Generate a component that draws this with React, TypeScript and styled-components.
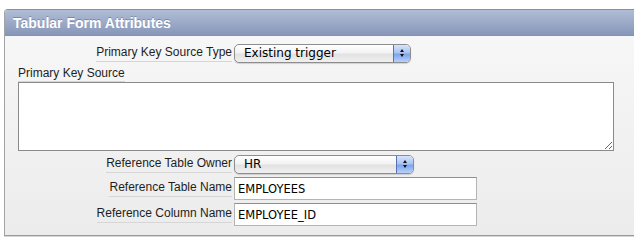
import React from "react";
import styled, { createGlobalStyle } from "styled-components";

const Global = createGlobalStyle`
  html, body { margin: 0; padding: 0; background: #ffffff; overflow: hidden; }
  body { font-family: "Liberation Sans", Arial, sans-serif; }
  * { box-sizing: border-box; }
`;

const Page = styled.div`
  padding: 9px 0 0 4px;
  width: 634px;
  height: 241px;
  overflow: hidden;
`;

const Panel = styled.section`
  width: 660px;
  border: 1px solid #a3a3a3;
  border-top-color: #8e8e8e;
  border-bottom-color: #9a9a9a;
  border-radius: 4px 4px 0 0;
  box-shadow: 0 1px 0 #d6d6d6;
  overflow: hidden;
  background: linear-gradient(#f8f8f8, #ececec);
`;

const Header = styled.h2`
  margin: 0;
  height: 26px;
  padding: 0 8px;
  display: flex;
  align-items: center;
  font: bold 14px "Liberation Sans", Arial, sans-serif;
  color: #ffffff;
  text-shadow: 0 -1px 0 rgba(40, 55, 90, 0.35);
  background: linear-gradient(#b1bdd6, #8797b9);
  border-bottom: 1px solid #8192b4;
`;

const Body = styled.div`
  padding: 7px 0 9px 12px;
  display: flex;
  flex-direction: column;
`;

const Row = styled.div<{ $h: number; $mt?: number }>`
  display: grid;
  grid-template-columns: 215px auto;
  column-gap: 2px;
  align-items: center;
  height: ${(p) => p.$h}px;
  margin-top: ${(p) => p.$mt ?? 0}px;
`;

const LabelCell = styled.div`
  display: flex;
  justify-content: flex-end;
`;

const Label = styled.label`
  display: inline-block;
  font-size: 12px;
  line-height: 14px;
  color: #1e1e1e;
  padding-bottom: 2px;
  border-bottom: 1px solid #d6d6d6;
`;

const StackLabel = styled(Label)`
  align-self: flex-start;
  margin: 3px 0 0 1px;
  padding-bottom: 1px;
`;

const SelectBox = styled.div<{ $w: number }>`
  width: ${(p) => p.$w}px;
  height: 19px;
  display: flex;
  border: 1px solid #8d8d8d;
  border-radius: 5px;
  background: linear-gradient(#ffffff 0%, #f3f3f3 45%, #e2e2e2 55%, #f0f0f0 100%);
  box-shadow: 0 1px 1px rgba(0, 0, 0, 0.15);
  overflow: hidden;
`;

const SelectValue = styled.span`
  flex: 1;
  padding-left: 9px;
  font: 12px "DejaVu Sans", Verdana, sans-serif;
  line-height: 17px;
  color: #000;
`;

const SelectButton = styled.span`
  width: 17px;
  display: flex;
  flex-direction: column;
  align-items: center;
  justify-content: center;
  gap: 2px;
  border-left: 1px solid #5b71b6;
  background: linear-gradient(#d7e4fb 0%, #a9c4f3 45%, #7ea5ec 55%, #b7d2fb 100%);
`;

const Arrow = styled.span<{ $up?: boolean }>`
  width: 0;
  height: 0;
  border-left: 2.5px solid transparent;
  border-right: 2.5px solid transparent;
  ${(p) =>
    p.$up ? "border-bottom: 3px solid #111;" : "border-top: 3px solid #111;"}
`;

const TextArea = styled.textarea`
  display: block;
  width: 596px;
  height: 69px;
  margin: 0 0 0 1px;
  border: 1px solid #8a8a8a;
  background: #ffffff;
  font: 12px "DejaVu Sans", sans-serif;
  resize: both;
  outline: none;
`;

const TextInput = styled.input`
  width: 243px;
  height: 23px;
  padding: 2px 3px 0;
  border: 1px solid #b4b4b4;
  border-top-color: #8f8f8f;
  background: #ffffff;
  font: 11.5px "DejaVu Sans", Verdana, sans-serif;
  color: #000;
  outline: none;
`;

function FakeSelect({ value, width }: { value: string; width: number }) {
  return (
    <SelectBox $w={width} role="combobox" aria-label={value}>
      <SelectValue>{value}</SelectValue>
      <SelectButton>
        <Arrow $up />
        <Arrow />
      </SelectButton>
    </SelectBox>
  );
}

export default function App() {
  return (
    <>
      <Global />
      <Page>
        <Panel>
          <Header>Tabular Form Attributes</Header>
          <Body>
            <Row $h={20} $mt={0}>
              <LabelCell>
                <Label>Primary Key Source Type</Label>
              </LabelCell>
              <FakeSelect value="Existing trigger" width={177} />
            </Row>
            <StackLabel>Primary Key Source</StackLabel>
            <TextArea />
            <Row $h={20} $mt={3}>
              <LabelCell>
                <Label>Reference Table Owner</Label>
              </LabelCell>
              <FakeSelect value="HR" width={180} />
            </Row>
            <Row $h={24} $mt={2}>
              <LabelCell>
                <Label>Reference Table Name</Label>
              </LabelCell>
              <TextInput defaultValue="EMPLOYEES" />
            </Row>
            <Row $h={24} $mt={2}>
              <LabelCell>
                <Label>Reference Column Name</Label>
              </LabelCell>
              <TextInput defaultValue="EMPLOYEE_ID" />
            </Row>
          </Body>
        </Panel>
      </Page>
    </>
  );
}
